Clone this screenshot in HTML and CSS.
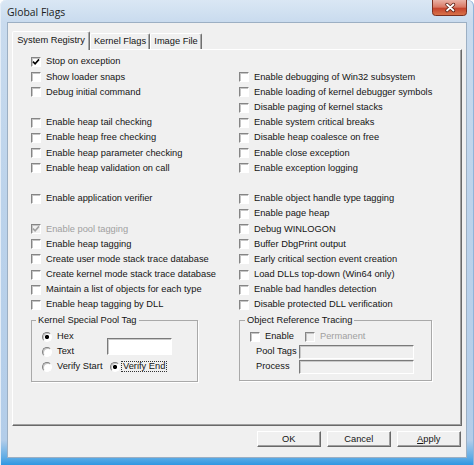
FILE: index.html
```
<!DOCTYPE html>
<html>
<head>
<meta charset="utf-8">
<title>Global Flags</title>
<link rel="stylesheet" href="styles.css">
</head>
<body>
<div class="window">
  <div class="titlebar">
    <span class="title">Global Flags</span>
    <svg class="close" width="35" height="16" viewBox="0 0 35 16">
      <defs>
        <linearGradient id="cg" x1="0" y1="0" x2="0" y2="1">
          <stop offset="0" stop-color="#eab2a6"/>
          <stop offset="0.45" stop-color="#d97a66"/>
          <stop offset="0.55" stop-color="#c6452e"/>
          <stop offset="1" stop-color="#d9764c"/>
        </linearGradient>
      </defs>
      <path d="M0.5 0 V12.5 Q0.5 15.5 3.5 15.5 H31.5 Q34.5 15.5 34.5 12.5 V0" fill="url(#cg)" stroke="#7a2f20"/>
      <path d="M15 4.5 L21.5 10.5 M21.5 4.5 L15 10.5" stroke="#5a1e12" stroke-width="3.4" stroke-linecap="round"/>
      <path d="M15 4.5 L21.5 10.5 M21.5 4.5 L15 10.5" stroke="#ffffff" stroke-width="1.8" stroke-linecap="round"/>
    </svg>
  </div>
  <div class="client">
    <div class="tabs">
      <div class="tab selected">System Registry</div>
      <div class="tab t-kernel">Kernel Flags</div>
      <div class="tab t-image">Image File</div>
    </div>
    <div class="panel">
      <div class="flags">
        <label class="cb"><span class="box"><svg class="tick" viewBox="0 0 8 8"><path d="M1 3.6 L3.1 5.8 L7 1.4"/></svg></span>Stop on exception</label>
        <label class="cb"><span class="box"></span>Show loader snaps</label>
        <label class="cb"><span class="box"></span>Debug initial command</label>
        <div class="cell"></div>
        <label class="cb"><span class="box"></span>Enable heap tail checking</label>
        <label class="cb"><span class="box"></span>Enable heap free checking</label>
        <label class="cb"><span class="box"></span>Enable heap parameter checking</label>
        <label class="cb"><span class="box"></span>Enable heap validation on call</label>
        <div class="cell"></div>
        <label class="cb"><span class="box"></span>Enable application verifier</label>
        <div class="cell"></div>
        <label class="cb disabled"><span class="box dis"><svg class="tick" viewBox="0 0 8 8"><path d="M1 3.6 L3.1 5.8 L7 1.4"/></svg></span>Enable pool tagging</label>
        <label class="cb"><span class="box"></span>Enable heap tagging</label>
        <label class="cb"><span class="box"></span>Create user mode stack trace database</label>
        <label class="cb"><span class="box"></span>Create kernel mode stack trace database</label>
        <label class="cb"><span class="box"></span>Maintain a list of objects for each type</label>
        <label class="cb"><span class="box"></span>Enable heap tagging by DLL</label>

        <div class="cell"></div>
        <label class="cb"><span class="box"></span>Enable debugging of Win32 subsystem</label>
        <label class="cb"><span class="box"></span>Enable loading of kernel debugger symbols</label>
        <label class="cb"><span class="box"></span>Disable paging of kernel stacks</label>
        <label class="cb"><span class="box"></span>Enable system critical breaks</label>
        <label class="cb"><span class="box"></span>Disable heap coalesce on free</label>
        <label class="cb"><span class="box"></span>Enable close exception</label>
        <label class="cb"><span class="box"></span>Enable exception logging</label>
        <div class="cell"></div>
        <label class="cb"><span class="box"></span>Enable object handle type tagging</label>
        <label class="cb"><span class="box"></span>Enable page heap</label>
        <label class="cb"><span class="box"></span>Debug WINLOGON</label>
        <label class="cb"><span class="box"></span>Buffer DbgPrint output</label>
        <label class="cb"><span class="box"></span>Early critical section event creation</label>
        <label class="cb"><span class="box"></span>Load DLLs top-down (Win64 only)</label>
        <label class="cb"><span class="box"></span>Enable bad handles detection</label>
        <label class="cb"><span class="box"></span>Disable protected DLL verification</label>
      </div>
      <div class="groups">
        <fieldset class="group kernel-pool">
          <legend>Kernel Special Pool Tag</legend>
          <div class="pool-grid">
            <label class="rb r-hex"><span class="radio on"></span>Hex</label>
            <label class="rb r-text"><span class="radio"></span>Text</label>
            <span class="field white hexfield"></span>
            <div class="verify-row">
              <label class="rb verify-start"><span class="radio"></span>Verify Start</label>
              <label class="rb verify-end"><span class="radio on"></span><span class="focus">Verify End</span></label>
            </div>
          </div>
        </fieldset>
        <fieldset class="group objref">
          <legend>Object Reference Tracing</legend>
          <div class="obj-enable">
            <label class="cb"><span class="box"></span>Enable</label>
            <label class="cb disabled perm"><span class="box dis"></span>Permanent</label>
          </div>
          <div class="obj-grid">
            <span class="lbl">Pool Tags</span><span class="field objfield"></span>
            <span class="lbl">Process</span><span class="field objfield"></span>
          </div>
        </fieldset>
      </div>
    </div>
    <div class="buttons">
      <button class="btn">OK</button>
      <button class="btn">Cancel</button>
      <button class="btn"><u>A</u>pply</button>
    </div>
  </div>
</div>
</body>
</html>
```

FILE: styles.css
```
* { box-sizing: border-box; }

body {
  margin: 0;
  font-family: "Liberation Sans", Arial, sans-serif;
  font-size: 9.3px;
  color: #141414;
  background: #ffffff;
}

.window {
  width: 474px;
  height: 465px;
  display: flex;
  flex-direction: column;
  padding: 0 7px 7px 7px;
  border-radius: 6px 6px 0 0;
  overflow: hidden;
  background: linear-gradient(to bottom, #dae7f4 0px, #c9dbee 22px, #bcd3eb 200px, #b3cde9 440px, #62ade5 457px, #2f97e2 465px);
  box-shadow: inset 1px 0 #e4edf7, inset -1px 0 #8fb4da;
}

.titlebar {
  flex: 0 0 22px;
  display: flex;
  justify-content: space-between;
  align-items: flex-start;
}

.title {
  font-family: "Open Sans", "Noto Sans", sans-serif;
  font-size: 10.4px;
  line-height: 14px;
  margin-top: 5px;
  color: #1c1c1c;
}

.close {
  display: block;
  width: 35px;
  height: 16px;
}

.client {
  flex: 1;
  background: #f0f0f0;
  border: 1px solid #9cafc3;
  display: flex;
  flex-direction: column;
}

.tabs {
  display: flex;
  align-items: flex-end;
  height: 18px;
  margin: 8px 0 0 4px;
  position: relative;
  z-index: 1;
}

.tab {
  height: 16px;
  line-height: 14px;
  text-align: center;
  white-space: nowrap;
  border: 1px solid;
  border-bottom: none;
  border-color: #ffffff #6f6f6f transparent #ffffff;
  box-shadow: inset -1px 0 #a9a9a9;
  border-radius: 2px 2px 0 0;
  background: #f0f0f0;
}

.tab.selected {
  width: 78px;
  height: 19px;
  line-height: 16px;
  margin-bottom: -1px;
}

.t-kernel { width: 60px; }
.t-image { width: 52px; }

.panel {
  height: 377px;
  margin: 0 4px;
  border: 1px solid;
  border-color: #ffffff #696969 #696969 #ffffff;
  box-shadow: inset -1px -1px #a0a0a0;
  padding: 4.4px 0 0 18px;
}

.flags {
  display: grid;
  grid-template-columns: 208px 1fr;
  grid-template-rows: repeat(17, 15.2px);
  grid-auto-flow: column;
}

.cb, .rb {
  display: flex;
  align-items: center;
  gap: 5px;
  white-space: nowrap;
  line-height: 11px;
}

.box {
  width: 10px;
  height: 10px;
  flex: none;
  border: 1px solid;
  border-color: #858585 #ffffff #ffffff #858585;
  background: #ffffff;
  box-shadow: inset 1px 1px #c6c6c6;
  display: flex;
  align-items: center;
  justify-content: center;
}

.tick {
  width: 8px;
  height: 8px;
  display: block;
}

.tick path {
  fill: none;
  stroke: #000000;
  stroke-width: 1.6;
}

.disabled { color: #a0a0a0; }
.box.dis { background: #f0f0f0; }
.box.dis .tick path { stroke: #a0a0a0; }

.groups {
  display: grid;
  grid-template-columns: 208px 193px;
  align-items: start;
  margin-top: 2.7px;
}

.group {
  margin: 0;
  padding: 0;
  min-width: 0;
  border: 1px solid #a9a9a9;
  box-shadow: 1px 1px #ffffff;
}

.group legend {
  padding: 0 2px;
  margin-left: 4px;
  line-height: 11px;
}

.kernel-pool { width: 167px; height: 67px; }
.objref { width: 193px; height: 66px; }
.objref legend { margin-left: 5px; }

.pool-grid {
  display: grid;
  grid-template-columns: 65px 65px;
  grid-template-rows: repeat(3, 15px);
  margin: 3px 0 0 10px;
}

.r-hex { grid-area: 1 / 1; }
.r-text { grid-area: 2 / 1; }

.hexfield {
  grid-area: 1 / 2 / 3 / 3;
  margin-top: 8.5px;
  height: 17px;
  width: 65px;
}

.verify-row {
  grid-area: 3 / 1 / 4 / 3;
  display: flex;
  align-items: center;
}

.verify-start { width: 68px; }
.verify-end { gap: 1px; }

.focus {
  border: 1px dotted #333333;
  padding: 0 1px;
  line-height: 9px;
}

.radio {
  width: 10px;
  height: 10px;
  flex: none;
  border-radius: 50%;
  border: 1px solid;
  border-color: #7f7f7f #ffffff #ffffff #7f7f7f;
  background: #ffffff;
  box-shadow: inset 1px 1px #c4c4c4;
}

.radio.on {
  background: radial-gradient(circle, #000000 0, #000000 1.8px, #ffffff 2.4px);
}

.field {
  display: block;
  border: 1px solid;
  border-color: #7a7a7a #ffffff #ffffff #7a7a7a;
  box-shadow: inset 1px 1px #c9c9c9;
}

.field.white { background: #ffffff; }

.obj-enable {
  display: flex;
  align-items: center;
  height: 15px;
  margin: 3px 0 0 10px;
}

.perm { margin-left: 11px; }

.obj-grid {
  display: grid;
  grid-template-columns: 43px 115px;
  grid-auto-rows: 15px;
  margin-left: 16px;
  align-items: center;
}

.lbl { line-height: 11px; }

.objfield {
  height: 14px;
  align-self: end;
}

.buttons {
  display: flex;
  justify-content: flex-end;
  gap: 5.5px;
  margin: 5px 5px 0 0;
}

.btn {
  width: 64.5px;
  height: 16px;
  padding: 0;
  font: inherit;
  color: inherit;
  line-height: 13px;
  background: #f0f0f0;
  border: 1px solid;
  border-color: #ffffff #696969 #696969 #ffffff;
  box-shadow: inset -1px -1px #a0a0a0;
}
```
